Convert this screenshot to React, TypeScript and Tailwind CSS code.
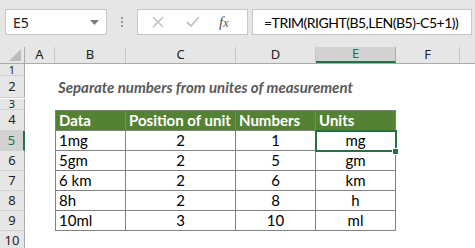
import React from "react";

const cellFont = { fontFamily: "Lato, 'Liberation Sans', sans-serif" };
const uiFont = { fontFamily: "'Noto Sans', 'Open Sans', sans-serif" };

const COLS = [
  { k: "A", w: "w-[30px]" },
  { k: "B", w: "w-[71px]" },
  { k: "C", w: "w-[110px]" },
  { k: "D", w: "w-[80px]" },
  { k: "E", w: "w-[80px]" },
  { k: "F", w: "w-[64px]" },
];

function RowHead({ n, h, sel, small }: { n: number; h: string; sel?: boolean; small?: boolean }) {
  return (
    <div
      className={`${h} w-[25px] shrink-0 flex items-center justify-center ${small ? "text-[11px] leading-[10px]" : "text-[13px] leading-none"} border-b border-[#d0d0d0] ${
        sel
          ? "bg-[#d2d2d2] text-[#217346] border-r-2 border-r-[#217346]"
          : "bg-[#e6e6e6] text-[#222] border-r border-r-[#ababab]"
      }`}
      style={uiFont}
    >
      {n}
    </div>
  );
}

const data = [
  ["1mg", "2", "1", "mg"],
  ["5gm", "2", "5", "gm"],
  ["6 km", "2", "6", "km"],
  ["8h", "2", "8", "h"],
  ["10ml", "3", "10", "ml"],
];

export default function App() {
  return (
    <div className="w-[475px] h-[248px] overflow-hidden bg-white relative">
      {/* formula bar */}
      <div className="h-[47px] bg-[#e6e6e6] flex items-start pt-[9px]">
        <div className="ml-[5px] w-[102px] h-[26px] bg-white border border-[#c6c6c6] flex items-center pl-[7px] pr-[5px] justify-between">
          <span className="text-[14px] text-[#222]" style={uiFont}>E5</span>
          <svg width="9" height="5" viewBox="0 0 9 5" className="mr-[2px]">
            <polygon points="0,0 9,0 4.5,5" fill="#7a7a7a" />
          </svg>
        </div>
        <div className="w-[30px] h-[26px] flex flex-col items-center justify-center gap-[2px]">
          <div className="w-[2px] h-[2px] bg-[#9a9a9a]" />
          <div className="w-[2px] h-[2px] bg-[#9a9a9a]" />
          <div className="w-[2px] h-[2px] bg-[#9a9a9a]" />
        </div>
        <div className="w-[111px] h-[26px] bg-white border border-[#c6c6c6] flex items-center">
          <svg width="12" height="12" viewBox="0 0 12 12" className="ml-[14px]">
            <path d="M1 1 L11 11 M11 1 L1 11" stroke="#c2c2c2" strokeWidth="1.6" />
          </svg>
          <svg width="14" height="12" viewBox="0 0 14 12" className="ml-[22px]">
            <path d="M1 6 L5 10 L13 1" stroke="#c2c2c2" strokeWidth="1.8" fill="none" />
          </svg>
          <span
            className="ml-[19px] text-[15px] italic text-[#555]"
            style={{ fontFamily: "'Liberation Serif', serif" }}
          >
            f<span className="text-[12px]">x</span>
          </span>
        </div>
        <div className="ml-[4px] w-[220px] h-[26px] bg-white border border-[#c6c6c6] flex items-center pl-[11px] overflow-hidden">
          <span className="text-[14px] tracking-[-0.5px] text-black whitespace-nowrap" style={cellFont}>
            =TRIM(RIGHT(B5,LEN(B5)-C5+1))
          </span>
        </div>
      </div>

      {/* column headers */}
      <div className="h-[17px] flex bg-[#e6e6e6] border-b border-[#ababab]">
        <div className="w-[25px] shrink-0 border-r border-[#ababab] relative">
          <svg width="25" height="16" viewBox="0 0 25 16" className="absolute left-0 top-0">
            <polygon points="21,2 21,14 9,14" fill="#bcbcbc" />
          </svg>
        </div>
        {COLS.map((c) => (
          <div
            key={c.k}
            className={`${c.w} shrink-0 flex items-center justify-center text-[13px] border-r ${
              c.k === "E"
                ? "bg-[#d2d2d2] text-[#217346] border-r-[#ababab] border-b-2 border-b-[#217346]"
                : "text-[#222] border-[#c6c6c6]"
            }`}
            style={uiFont}
          >
            {c.k}
          </div>
        ))}
        <div className="flex-1" />
      </div>

      {/* row 1 */}
      <div className="flex">
        <RowHead n={1} h="h-[12px]" small />
      </div>
      {/* row 2 */}
      <div className="flex">
        <RowHead n={2} h="h-[22px]" />
        <div className="w-[30px] shrink-0" />
        <div
          className="pl-[3px] flex items-center text-[15px] font-bold italic text-[#595959] whitespace-nowrap"
          style={cellFont}
        >
          Separate numbers from unites of measurement
        </div>
      </div>
      {/* row 3 */}
      <div className="flex">
        <RowHead n={3} h="h-[11px]" small />
      </div>
      {/* row 4 header */}
      <div className="flex">
        <RowHead n={4} h="h-[21px]" />
        <div className="w-[30px] shrink-0" />
        {["Data", "Position of unit", "Numbers", "Units"].map((t, i) => (
          <div
            key={t}
            className={`${COLS[i + 1].w} shrink-0 h-[21px] bg-[#548235] text-white font-bold text-[15px] border-t border-b border-r border-[#808080] ${
              i === 0 ? "border-l" : ""
            } flex items-center pl-[3px] whitespace-nowrap`}
            style={cellFont}
          >
            {t}
          </div>
        ))}
      </div>
      {/* data rows */}
      {data.map((r, ri) => (
        <div className="flex" key={ri}>
          <RowHead n={ri + 5} h="h-[20px]" sel={ri === 0} />
          <div className="w-[30px] shrink-0" />
          {r.map((t, i) => (
            <div
              key={i}
              className={`${COLS[i + 1].w} shrink-0 h-[20px] text-black text-[15px] border-b border-r border-[#808080] ${
                i === 0 ? "border-l pl-[3px] justify-start" : "justify-center"
              } flex items-center relative`}
              style={cellFont}
            >
              {t}
              {ri === 0 && i === 3 && (
                <>
                  <div className="absolute left-[-1px] top-[-1px] w-[82px] h-[22px] border-2 border-[#217346] z-10" />
                  <div className="absolute left-[76px] top-[17px] w-[7px] h-[7px] bg-[#217346] border border-white z-20" />
                </>
              )}
            </div>
          ))}
        </div>
      ))}
      {/* row 10 */}
      <div className="flex">
        <RowHead n={10} h="h-[20px]" />
      </div>
    </div>
  );
}
